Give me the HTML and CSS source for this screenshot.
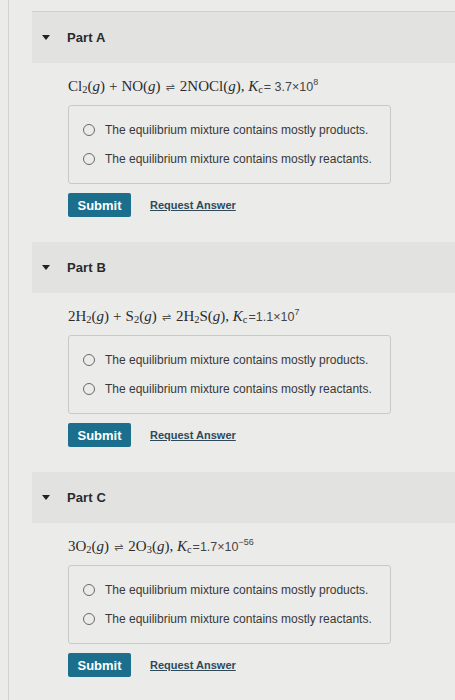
FILE: index.html
```html
<!DOCTYPE html>
<html>
<head>
<meta charset="utf-8">
<link rel="stylesheet" href="styles.css">
</head>
<body>
<div class="page">
  <div class="parts">
    <section class="part">
      <div class="part-head"><span class="caret"></span><span class="part-title">Part A</span></div>
      <div class="part-body">
        <div class="eq">Cl<sub>2</sub>(<i>g</i>)<span class="op">+</span>NO(<i>g</i>)<span class="eqarrow">⇌</span>2NOCl(<i>g</i>), <i>K</i><sub>c</sub><span class="sans">= 3.7×10<sup>8</sup></span></div>
        <div class="choices">
          <label class="choice"><span class="radio"></span>The equilibrium mixture contains mostly products.</label>
          <label class="choice"><span class="radio"></span>The equilibrium mixture contains mostly reactants.</label>
        </div>
        <div class="actions"><button class="submit">Submit</button><a class="req">Request Answer</a></div>
      </div>
    </section>
    <section class="part">
      <div class="part-head"><span class="caret"></span><span class="part-title">Part B</span></div>
      <div class="part-body">
        <div class="eq">2H<sub>2</sub>(<i>g</i>)<span class="op">+</span>S<sub>2</sub>(<i>g</i>)<span class="eqarrow">⇌</span>2H<sub>2</sub>S(<i>g</i>), <i>K</i><sub>c</sub><span class="sans">=1.1×10<sup>7</sup></span></div>
        <div class="choices">
          <label class="choice"><span class="radio"></span>The equilibrium mixture contains mostly products.</label>
          <label class="choice"><span class="radio"></span>The equilibrium mixture contains mostly reactants.</label>
        </div>
        <div class="actions"><button class="submit">Submit</button><a class="req">Request Answer</a></div>
      </div>
    </section>
    <section class="part">
      <div class="part-head"><span class="caret"></span><span class="part-title">Part C</span></div>
      <div class="part-body">
        <div class="eq">3O<sub>2</sub>(<i>g</i>)<span class="eqarrow">⇌</span>2O<sub>3</sub>(<i>g</i>), <i>K</i><sub>c</sub><span class="sans">=1.7×10<sup>−56</sup></span></div>
        <div class="choices">
          <label class="choice"><span class="radio"></span>The equilibrium mixture contains mostly products.</label>
          <label class="choice"><span class="radio"></span>The equilibrium mixture contains mostly reactants.</label>
        </div>
        <div class="actions"><button class="submit">Submit</button><a class="req">Request Answer</a></div>
      </div>
    </section>
  </div>
</div>
</body>
</html>
```
FILE: styles.css
```css
html, body {
  margin: 0;
  padding: 0;
  background: #ebebea;
  font-family: "Liberation Sans", Arial, sans-serif;
  color: #333;
}
.page {
  margin-left: 8px;
  border-left: 1px solid #d2d2d2;
  min-height: 700px;
  padding-left: 23px;
  padding-top: 11px;
  box-sizing: border-box;
}
.parts {
  border-top: 1px solid #d0d0d0;
}
.part-head {
  height: 51px;
  background: #e2e2e1;
  display: flex;
  align-items: center;
  padding-left: 10px;
}
.caret {
  width: 0;
  height: 0;
  border-left: 4.5px solid transparent;
  border-right: 4.5px solid transparent;
  border-top: 5px solid #222;
  margin-right: 17px;
}
.part-title {
  font-size: 13px;
  font-weight: 600;
  color: #2a2a2a;
  letter-spacing: 0.1px;
}
.part-body {
  padding-left: 36px;
  padding-bottom: 25px;
}
.eq {
  margin-top: 13px;
  height: 20px;
  line-height: 20px;
  font-family: "Liberation Serif", "Times New Roman", serif;
  font-size: 15px;
  color: #2b2b2b;
  white-space: nowrap;
}
.eq sub {
  font-size: 10.5px;
  vertical-align: -2px;
  line-height: 0;
}
.eq i {
  font-style: italic;
}
.op {
  margin: 0 4px;
}
.eqarrow {
  font-size: 11px;
  color: #555;
  font-family: "DejaVu Sans", sans-serif;
  margin: 0 5px;
}
.sans {
  font-family: "Liberation Sans", Arial, sans-serif;
  font-size: 12.5px;
  color: #444;
  margin-left: 1px;
}
.sans sup {
  font-size: 9px;
  vertical-align: 6px;
  line-height: 0;
}
.choices {
  margin-top: 9px;
  width: 323px;
  height: 79px;
  border: 1px solid #c9c9c9;
  border-radius: 3px;
  padding: 14px 0 0 14px;
  box-sizing: border-box;
  display: flex;
  flex-direction: column;
  gap: 9px;
}
.choice {
  display: flex;
  align-items: center;
  height: 20px;
  font-size: 12px;
  color: #383838;
  white-space: nowrap;
}
.radio {
  width: 10px;
  height: 10px;
  border: 1.5px solid #6a6a6a;
  border-radius: 50%;
  margin-right: 10px;
  flex: none;
}
.actions {
  margin-top: 9px;
  display: flex;
  align-items: center;
}
.submit {
  width: 63px;
  height: 24px;
  background: #1c6f8c;
  color: #fff;
  border: none;
  border-radius: 2px;
  font-family: "Liberation Sans", Arial, sans-serif;
  font-size: 13px;
  font-weight: bold;
  padding: 0;
}
.req {
  margin-left: 19px;
  font-size: 11px;
  font-weight: bold;
  color: #2e4a5a;
  text-decoration: underline;
}
```
